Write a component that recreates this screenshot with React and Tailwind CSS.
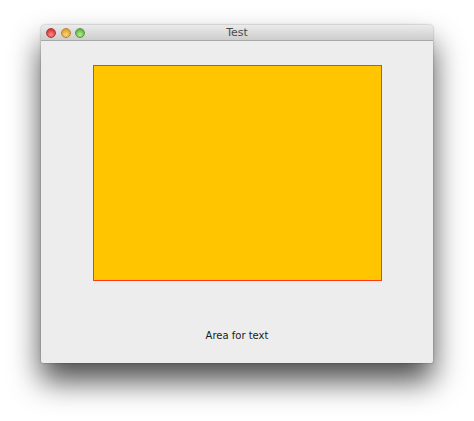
export default function App() {
  return (
    <div className="w-[474px] h-[421px] bg-white pt-[25px] pl-[41px]" style={{ fontFamily: '"Liberation Sans", Arial, sans-serif' }}>
      {/* Window */}
      <div className="w-[392px] h-[338px] flex flex-col rounded-t-[4px] rounded-b-[2px] bg-[#ededed] shadow-[0_18px_30px_rgba(0,0,0,0.7),0_0_2px_rgba(0,0,0,0.4)]">
        {/* Title bar */}
        <div className="h-[16px] grid grid-cols-[1fr_auto_1fr] items-center rounded-t-[4px] bg-gradient-to-b from-[#ebebeb] to-[#cdcdcd] border-b border-[#a8a8a8]">
          <div className="flex items-center gap-[4.5px] pl-[5px]">
            <span className="w-[10px] h-[10px] rounded-full border border-[#a8393a] bg-[radial-gradient(circle_at_50%_70%,#ff8c85,#d9393b_70%)]" />
            <span className="w-[10px] h-[10px] rounded-full border border-[#b48433] bg-[radial-gradient(circle_at_50%_70%,#ffd57a,#dda230_70%)]" />
            <span className="w-[10px] h-[10px] rounded-full border border-[#5a9540] bg-[radial-gradient(circle_at_50%_70%,#b6ef93,#62b44a_70%)]" />
          </div>
          <span className="text-[11px] leading-none text-[#4a4a4a]" style={{ fontFamily: '"DejaVu Sans", sans-serif' }}>Test</span>
          <div />
        </div>

        {/* Content */}
        <div className="flex-1 flex flex-col items-center pt-[24px]">
          <div className="w-[289px] h-[216px] border border-[#ff3a1f] bg-[#ffc600]" />
          <p className="mt-[48px] text-[10px] leading-[13px] text-[#1a1a1a]" style={{ fontFamily: '"DejaVu Sans", sans-serif' }}>Area for text</p>
        </div>
      </div>
    </div>
  )
}
